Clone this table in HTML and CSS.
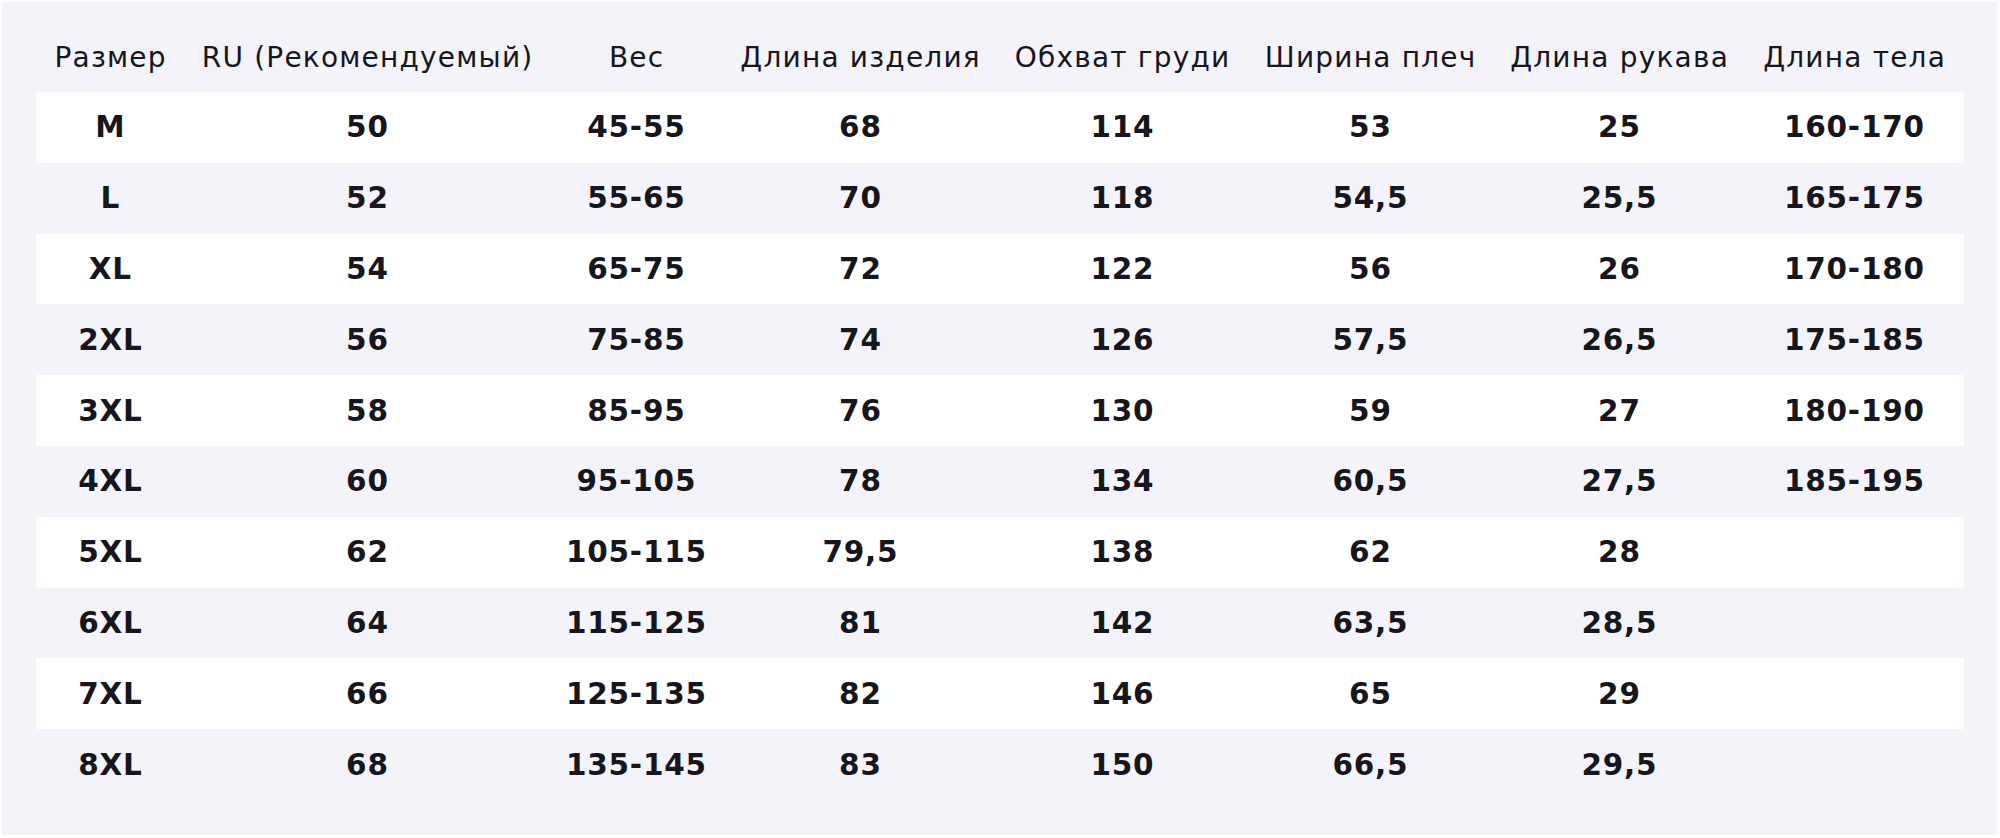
FILE: index.html
```html
<!DOCTYPE html>
<html lang="ru">
<head>
<meta charset="utf-8">
<title>Таблица размеров</title>
<link rel="stylesheet" href="styles.css">
</head>
<body>
<div class="panel">
  <table class="sizes">
    <colgroup>
      <col class="c1"><col class="c2"><col class="c3"><col class="c4">
      <col class="c5"><col class="c6"><col class="c7"><col class="c8">
    </colgroup>
    <thead>
      <tr>
        <th>Размер</th><th>RU (Рекомендуемый)</th><th>Вес</th><th>Длина изделия</th>
        <th>Обхват груди</th><th>Ширина плеч</th><th>Длина рукава</th><th>Длина тела</th>
      </tr>
    </thead>
    <tbody>
      <tr><td>M</td><td>50</td><td>45-55</td><td>68</td><td>114</td><td>53</td><td>25</td><td>160-170</td></tr>
      <tr><td>L</td><td>52</td><td>55-65</td><td>70</td><td>118</td><td>54,5</td><td>25,5</td><td>165-175</td></tr>
      <tr><td>XL</td><td>54</td><td>65-75</td><td>72</td><td>122</td><td>56</td><td>26</td><td>170-180</td></tr>
      <tr><td>2XL</td><td>56</td><td>75-85</td><td>74</td><td>126</td><td>57,5</td><td>26,5</td><td>175-185</td></tr>
      <tr><td>3XL</td><td>58</td><td>85-95</td><td>76</td><td>130</td><td>59</td><td>27</td><td>180-190</td></tr>
      <tr><td>4XL</td><td>60</td><td>95-105</td><td>78</td><td>134</td><td>60,5</td><td>27,5</td><td>185-195</td></tr>
      <tr><td>5XL</td><td>62</td><td>105-115</td><td>79,5</td><td>138</td><td>62</td><td>28</td><td></td></tr>
      <tr><td>6XL</td><td>64</td><td>115-125</td><td>81</td><td>142</td><td>63,5</td><td>28,5</td><td></td></tr>
      <tr><td>7XL</td><td>66</td><td>125-135</td><td>82</td><td>146</td><td>65</td><td>29</td><td></td></tr>
      <tr><td>8XL</td><td>68</td><td>135-145</td><td>83</td><td>150</td><td>66,5</td><td>29,5</td><td></td></tr>
    </tbody>
  </table>
</div>
</body>
</html>
```
FILE: styles.css
```css
html, body {
  margin: 0;
  padding: 0;
  background: #ffffff;
}

body {
  font-family: "DejaVu Sans", "Noto Sans", sans-serif;
  color: #16161c;
}

.panel {
  margin: 2px 3px 3px 2px;
  height: 833px;
  box-sizing: border-box;
  background: #f4f3f9;
  padding: 20px 33px 35px 34px;
}

.sizes {
  width: 1928px;
  table-layout: fixed;
  border-collapse: collapse;
  border-spacing: 0;
}

.c1 { width: 148px; }
.c2 { width: 366px; }
.c3 { width: 172px; }
.c4 { width: 276px; }
.c5 { width: 248px; }
.c6 { width: 248px; }
.c7 { width: 250px; }
.c8 { width: 220px; }

.sizes th {
  height: 70px;
  padding: 0 0 0 1.2px;
  font-size: 28px;
  letter-spacing: 1.2px;
  font-weight: normal;
  text-align: center;
  vertical-align: middle;
  white-space: nowrap;
}

.sizes td {
  height: 70.8px;
  padding: 0 0 0 0.8px;
  font-size: 29.5px;
  letter-spacing: 0.8px;
  font-weight: bold;
  text-align: center;
  vertical-align: middle;
  white-space: nowrap;
}

.sizes tbody tr:nth-child(odd) {
  background: #ffffff;
}

.sizes tbody tr:nth-child(even) {
  background: transparent;
}
```
